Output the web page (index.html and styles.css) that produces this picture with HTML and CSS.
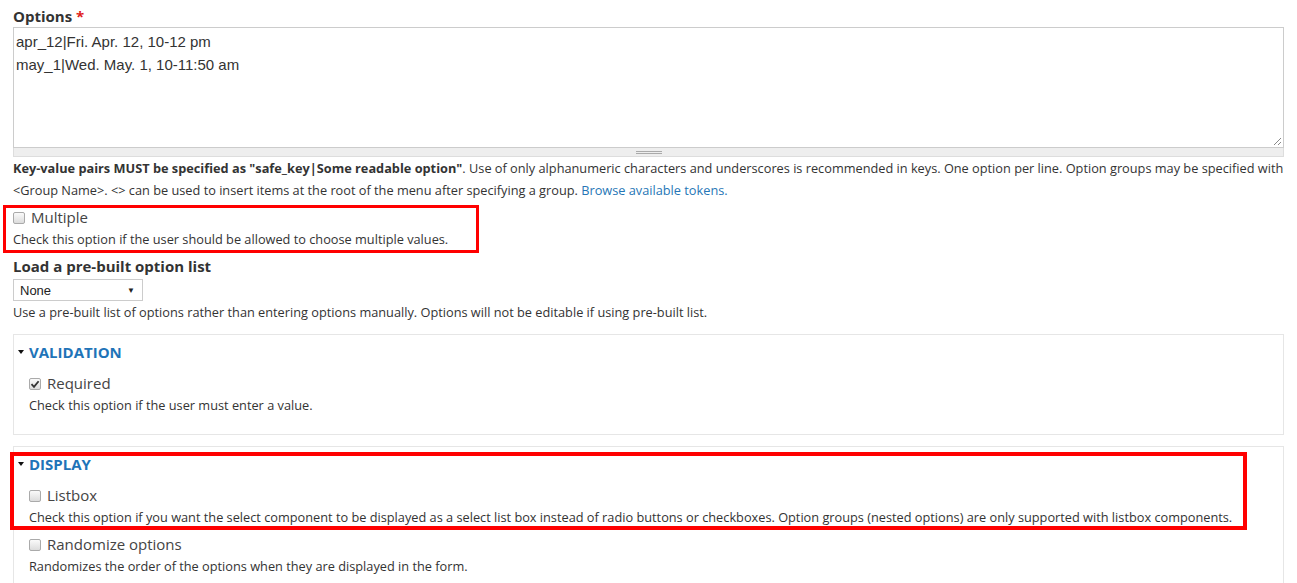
FILE: index.html
```html
<!DOCTYPE html>
<html lang="en">
<head>
<meta charset="utf-8">
<title>Options</title>
<link rel="stylesheet" href="styles.css">
</head>
<body>
<div class="page">
  <div class="form-item">
    <label class="label">Options <span class="req">*</span></label>
    <div class="textarea-wrap">
      <div class="textarea">apr_12|Fri. Apr. 12, 10-12 pm<br>may_1|Wed. May. 1, 10-11:50 am
        <svg class="resize" width="9" height="9" viewBox="0 0 9 9"><path d="M8 1L1 8M8 5L5 8" stroke="#888" stroke-width="1"/></svg>
      </div>
      <div class="grippie"><span></span></div>
    </div>
    <div class="desc nowrap"><strong>Key-value pairs MUST be specified as "safe_key|Some readable option"</strong>. Use of only alphanumeric characters and underscores is recommended in keys. One option per line. Option groups may be specified with<br>&lt;Group Name&gt;. &lt;&gt; can be used to insert items at the root of the menu after specifying a group. <a href="#">Browse available tokens.</a></div>
  </div>

  <div class="form-item">
    <div class="check-row"><span class="cb"></span><span class="check-label">Multiple</span></div>
    <div class="desc">Check this option if the user should be allowed to choose multiple values.</div>
  </div>

  <div class="form-item">
    <label class="label label-select">Load a pre-built option list</label>
    <div class="select"><span>None</span><span class="arrow">&#9660;</span></div>
    <div class="desc">Use a pre-built list of options rather than entering options manually. Options will not be editable if using pre-built list.</div>
  </div>

  <div class="fieldset fieldset-validation">
    <div class="legend"><span class="tri"></span>VALIDATION</div>
    <div class="form-item">
      <div class="check-row"><span class="cb checked"><svg width="10" height="10" viewBox="0 0 10 10"><path d="M1.5 5.2L4 7.8L8.6 2.2" fill="none" stroke="#333" stroke-width="1.8"/></svg></span><span class="check-label">Required</span></div>
      <div class="desc">Check this option if the user must enter a value.</div>
    </div>
  </div>

  <div class="fieldset fieldset-open">
    <div class="legend"><span class="tri"></span>DISPLAY</div>
    <div class="form-item">
      <div class="check-row"><span class="cb"></span><span class="check-label">Listbox</span></div>
      <div class="desc">Check this option if you want the select component to be displayed as a select list box instead of radio buttons or checkboxes. Option groups (nested options) are only supported with listbox components.</div>
    </div>
    <div class="form-item">
      <div class="check-row"><span class="cb"></span><span class="check-label">Randomize options</span></div>
      <div class="desc">Randomizes the order of the options when they are displayed in the form.</div>
    </div>
  </div>

  <div class="mark mark-1"></div>
  <div class="mark mark-2"></div>
</div>
</body>
</html>
```

FILE: styles.css
```css
html, body {
  margin: 0;
  padding: 0;
  background: #fff;
}
body {
  font-family: "Open Sans", "DejaVu Sans", sans-serif;
  color: #333;
  overflow: hidden;
  height: 583px;
}
.page {
  position: relative;
  width: 1271px;
  padding: 6px 13px 0 13px;
}
.form-item {
  margin-bottom: 6px;
}
.label {
  display: block;
  font-size: 15px;
  font-weight: 700;
  line-height: 20px;
  margin-bottom: 1px;
  color: #333;
}
.label-select {
  margin-bottom: 3px;
}
.req {
  color: #e0201b;
}
.textarea-wrap {
  width: 1271px;
}
.textarea {
  position: relative;
  box-sizing: border-box;
  height: 121px;
  border: 1px solid #ccc;
  padding: 2px 2px;
  font-family: "Liberation Sans", Arial, sans-serif;
  font-size: 15px;
  line-height: 23px;
  color: #333;
}
.resize {
  position: absolute;
  right: 1px;
  bottom: 1px;
}
.grippie {
  height: 8px;
  background: #eee;
  border: 1px solid #ddd;
  border-top: none;
  display: flex;
  justify-content: center;
  align-items: center;
}
.grippie span {
  width: 26px;
  height: 3px;
  border-top: 1px solid #aaa;
  border-bottom: 1px solid #aaa;
  box-sizing: border-box;
}
.desc {
  font-size: 12.75px;
  line-height: 22px;
  color: #333;
}
.nowrap {
  white-space: nowrap;
}
.desc strong {
  font-weight: 700;
}
.desc a {
  color: #2676b6;
  text-decoration: none;
}
.check-row {
  display: flex;
  align-items: center;
  height: 21px;
}
.cb {
  box-sizing: border-box;
  width: 12px;
  height: 12px;
  border: 1px solid #aaa;
  border-radius: 2px;
  background: linear-gradient(#fafafa, #dcdcdc);
  margin-right: 6px;
  display: flex;
  align-items: center;
  justify-content: center;
}
.check-label {
  font-size: 15px;
  line-height: 21px;
  color: #444;
}
.select {
  box-sizing: border-box;
  width: 130px;
  height: 22px;
  border: 1px solid #ccc;
  display: flex;
  align-items: center;
  justify-content: space-between;
  padding: 0 7px 0 6px;
  font-family: "Liberation Sans", Arial, sans-serif;
  font-size: 13px;
  color: #222;
}
.select .arrow {
  font-size: 8px;
  color: #222;
}
.fieldset {
  box-sizing: border-box;
  width: 1271px;
  border: 1px solid #e6e6e6;
  padding: 7px 15px 12px 15px;
  margin-top: 11px;
}
.fieldset-validation {
  margin-bottom: 11px;
}
.fieldset-open {
  height: 200px;
  margin-bottom: 0;
}
.legend {
  font-size: 15px;
  font-weight: 700;
  line-height: 20px;
  color: #1f74b8;
  margin-bottom: 11px;
  margin-left: -11px;
  display: flex;
  align-items: center;
}
.tri {
  width: 0;
  height: 0;
  border-left: 3px solid transparent;
  border-right: 3px solid transparent;
  border-top: 4px solid #111;
  margin-right: 5px;
}
.mark {
  position: absolute;
  border: 3px solid #ff0000;
  pointer-events: none;
}
.mark-1 {
  left: 3px;
  top: 205px;
  width: 470px;
  height: 42px;
}
.mark-2 {
  left: 10px;
  top: 452px;
  width: 1229px;
  height: 70px;
  border-width: 4px;
}
```
